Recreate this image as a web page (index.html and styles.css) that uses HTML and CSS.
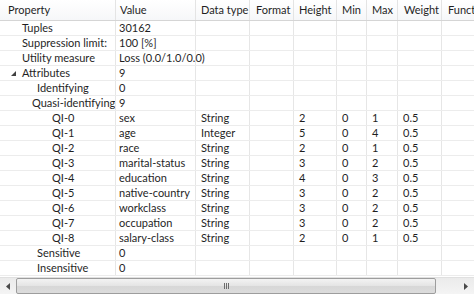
FILE: index.html
```html
<!DOCTYPE html>
<html>
<head>
<meta charset="utf-8">
<link rel="stylesheet" href="styles.css">
</head>
<body>
<div class="view">
  <div class="grid">
    <div class="row head">
      <div class="c c1">Property</div><div class="c c2">Value</div><div class="c c3">Data type</div><div class="c c4">Format</div><div class="c c5">Height</div><div class="c c6">Min</div><div class="c c7">Max</div><div class="c c8">Weight</div><div class="c c9">Function</div>
    </div>
    <div class="row"><div class="c c1 l1">Tuples</div><div class="c c2">30162</div><div class="c c3"></div><div class="c c4"></div><div class="c c5"></div><div class="c c6"></div><div class="c c7"></div><div class="c c8"></div><div class="c c9"></div></div>
    <div class="row"><div class="c c1 l1">Suppression limit:</div><div class="c c2">100 [%]</div><div class="c c3"></div><div class="c c4"></div><div class="c c5"></div><div class="c c6"></div><div class="c c7"></div><div class="c c8"></div><div class="c c9"></div></div>
    <div class="row"><div class="c c1 l1">Utility measure</div><div class="c c2 wide">Loss (0.0/1.0/0.0)</div><div class="c c3"></div><div class="c c4"></div><div class="c c5"></div><div class="c c6"></div><div class="c c7"></div><div class="c c8"></div><div class="c c9"></div></div>
    <div class="row"><div class="c c1 l0"><svg class="tw" viewBox="0 0 6 6"><path d="M6 0V6H0Z" fill="#404040"/></svg>Attributes</div><div class="c c2">9</div><div class="c c3"></div><div class="c c4"></div><div class="c c5"></div><div class="c c6"></div><div class="c c7"></div><div class="c c8"></div><div class="c c9"></div></div>
    <div class="row"><div class="c c1 l2">Identifying</div><div class="c c2">0</div><div class="c c3"></div><div class="c c4"></div><div class="c c5"></div><div class="c c6"></div><div class="c c7"></div><div class="c c8"></div><div class="c c9"></div></div>
    <div class="row"><div class="c c1 l1b"><svg class="tw" viewBox="0 0 6 6"><path d="M6 0V6H0Z" fill="#404040"/></svg>Quasi-identifying</div><div class="c c2">9</div><div class="c c3"></div><div class="c c4"></div><div class="c c5"></div><div class="c c6"></div><div class="c c7"></div><div class="c c8"></div><div class="c c9"></div></div>
    <div class="row"><div class="c c1 l3">QI-0</div><div class="c c2">sex</div><div class="c c3">String</div><div class="c c4"></div><div class="c c5">2</div><div class="c c6">0</div><div class="c c7">1</div><div class="c c8">0.5</div><div class="c c9"></div></div>
    <div class="row"><div class="c c1 l3">QI-1</div><div class="c c2">age</div><div class="c c3">Integer</div><div class="c c4"></div><div class="c c5">5</div><div class="c c6">0</div><div class="c c7">4</div><div class="c c8">0.5</div><div class="c c9"></div></div>
    <div class="row"><div class="c c1 l3">QI-2</div><div class="c c2">race</div><div class="c c3">String</div><div class="c c4"></div><div class="c c5">2</div><div class="c c6">0</div><div class="c c7">1</div><div class="c c8">0.5</div><div class="c c9"></div></div>
    <div class="row"><div class="c c1 l3">QI-3</div><div class="c c2">marital-status</div><div class="c c3">String</div><div class="c c4"></div><div class="c c5">3</div><div class="c c6">0</div><div class="c c7">2</div><div class="c c8">0.5</div><div class="c c9"></div></div>
    <div class="row"><div class="c c1 l3">QI-4</div><div class="c c2">education</div><div class="c c3">String</div><div class="c c4"></div><div class="c c5">4</div><div class="c c6">0</div><div class="c c7">3</div><div class="c c8">0.5</div><div class="c c9"></div></div>
    <div class="row"><div class="c c1 l3">QI-5</div><div class="c c2">native-country</div><div class="c c3">String</div><div class="c c4"></div><div class="c c5">3</div><div class="c c6">0</div><div class="c c7">2</div><div class="c c8">0.5</div><div class="c c9"></div></div>
    <div class="row"><div class="c c1 l3">QI-6</div><div class="c c2">workclass</div><div class="c c3">String</div><div class="c c4"></div><div class="c c5">3</div><div class="c c6">0</div><div class="c c7">2</div><div class="c c8">0.5</div><div class="c c9"></div></div>
    <div class="row"><div class="c c1 l3">QI-7</div><div class="c c2">occupation</div><div class="c c3">String</div><div class="c c4"></div><div class="c c5">3</div><div class="c c6">0</div><div class="c c7">2</div><div class="c c8">0.5</div><div class="c c9"></div></div>
    <div class="row"><div class="c c1 l3">QI-8</div><div class="c c2">salary-class</div><div class="c c3">String</div><div class="c c4"></div><div class="c c5">2</div><div class="c c6">0</div><div class="c c7">1</div><div class="c c8">0.5</div><div class="c c9"></div></div>
    <div class="row"><div class="c c1 l2">Sensitive</div><div class="c c2">0</div><div class="c c3"></div><div class="c c4"></div><div class="c c5"></div><div class="c c6"></div><div class="c c7"></div><div class="c c8"></div><div class="c c9"></div></div>
    <div class="row"><div class="c c1 l2">Insensitive</div><div class="c c2">0</div><div class="c c3"></div><div class="c c4"></div><div class="c c5"></div><div class="c c6"></div><div class="c c7"></div><div class="c c8"></div><div class="c c9"></div></div>
  </div>
  <div class="hscroll">
    <div class="sbtn"><svg width="4" height="7" viewBox="0 0 4 7"><path d="M4 0V7L0 3.5Z" fill="#4a4a4a"/></svg></div>
    <div class="track">
      <div class="thumb"><span class="grip"><i></i><i></i><i></i></span></div>
    </div>
    <div class="sbtn"><svg width="4" height="7" viewBox="0 0 4 7"><path d="M0 0V7L4 3.5Z" fill="#4a4a4a"/></svg></div>
  </div>
</div>
</body>
</html>
```
FILE: styles.css
```css
html, body {
  margin: 0;
  padding: 0;
  background: #ffffff;
}
.view {
  width: 474px;
  height: 294px;
  overflow: hidden;
  display: flex;
  flex-direction: column;
  font-family: Lato, "Noto Sans", sans-serif;
  font-size: 11px;
  color: #1f1f1f;
}
.grid {
  height: 277px;
  overflow: hidden;
}
.row {
  display: flex;
  height: 15px;
  white-space: nowrap;
}
.row.head {
  height: 21px;
  background: linear-gradient(#ffffff, #f6f7f9);
  border-bottom: 1px solid #d5d5d5;
  box-sizing: border-box;
}
.row:not(.head) {
  border-bottom: 1px solid #ececec;
  box-sizing: border-box;
}
.c {
  flex: none;
  box-sizing: border-box;
  border-right: 1px solid #e6e6e6;
  overflow: hidden;
  line-height: 14px;
  padding-left: 3px;
  display: flex;
  align-items: center;
}
.head .c {
  line-height: 20px;
  border-right-color: #e4e4e4;
  padding-left: 6px;
}
.c1 { width: 116px; }
.c2 { width: 80px; }
.c2.wide { overflow: visible; }
.c3 { width: 54px; }
.c4 { width: 44px; }
.c5 { width: 43px; }
.c6 { width: 30px; }
.c7 { width: 31px; }
.c8 { width: 44px; }
.c9 { width: 60px; }
.head .c1 { padding-left: 8px; }
.head .c2 { padding-left: 4px; }
.head .c9 { padding-left: 6px; }
.c5, .c6, .c7, .c8 { padding-left: 5px; }
.head .c5 { padding-left: 5px; }
.head .c6, .head .c7 { padding-left: 5px; }
.c3 { padding-left: 5px; }
.head .c3 { padding-left: 5px; }
.l0 { padding-left: 11px; }
.l1 { padding-left: 22px; }
.l1b { padding-left: 26px; }
.l2 { padding-left: 37px; }
.l3 { padding-left: 52px; }
.tw {
  width: 5px;
  height: 5px;
  margin-right: 6px;
  margin-top: 1px;
}
.hscroll {
  height: 16px;
  display: flex;
  background: linear-gradient(#ebebeb, #f4f4f4);
  border-top: 1px solid #e0e0e0;
}
.sbtn {
  width: 16px;
  flex: none;
  display: flex;
  align-items: center;
  justify-content: center;
}
.track {
  flex: 1;
  display: flex;
}
.thumb {
  width: 420px;
  box-sizing: border-box;
  border: 1px solid #9d9d9d;
  border-radius: 2px;
  background: linear-gradient(#f3f3f3, #e4e4e4 50%, #d7d7d7 51%, #dcdcdc);
  display: flex;
  align-items: center;
  justify-content: center;
}
.grip {
  display: flex;
  gap: 1px;
}
.grip i {
  width: 1px;
  height: 6px;
  background: #6c6c6c;
  display: block;
}
```
